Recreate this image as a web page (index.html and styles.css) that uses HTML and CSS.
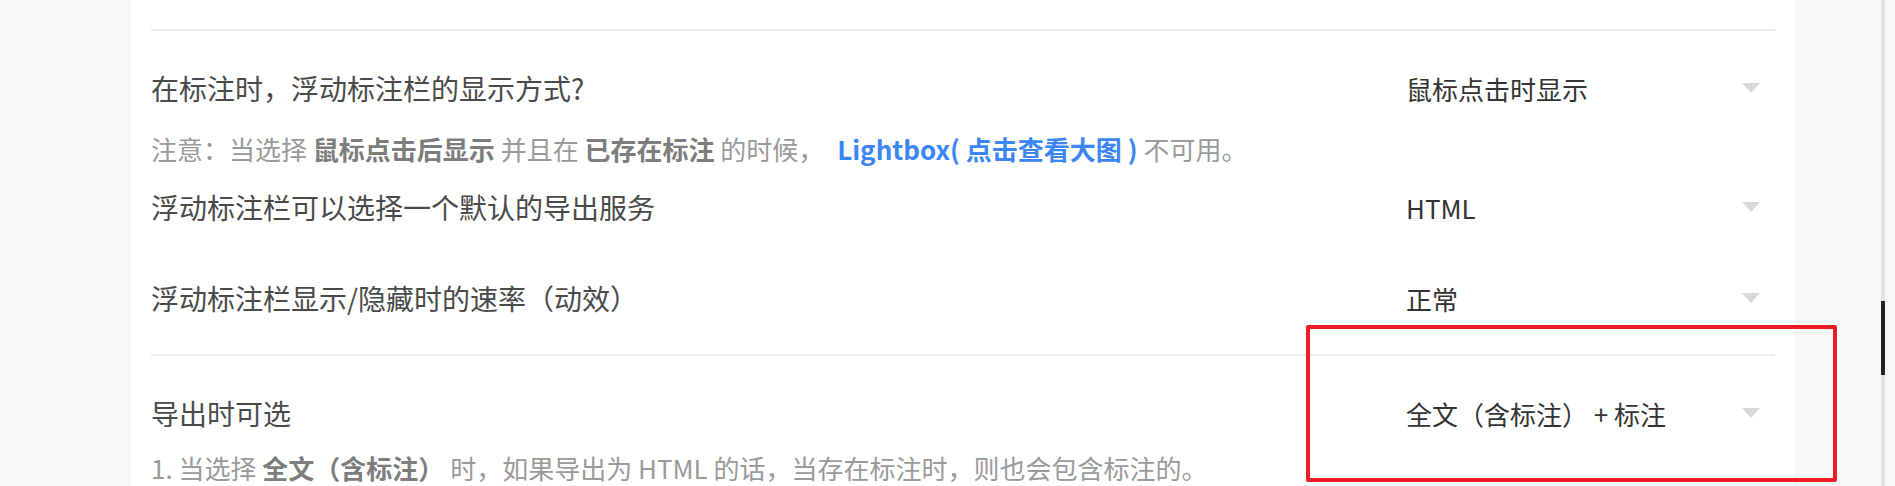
FILE: index.html
```
<!DOCTYPE html>
<html lang="zh-CN">
<head>
    <meta charset="UTF-8">
    <meta name="viewport" content="width=device-width, initial-scale=1.0">
    <title>设置</title>
    <link rel="stylesheet" href="styles.css">
</head>
<body>
    <div class="page">
        <div class="side"></div>

        <div class="content">
            <div class="group">
                <div class="row">
                    <div class="title">在标注时，浮动标注栏的显示方式?</div>
                    <div class="select">鼠标点击时显示<span class="arrow"></span></div>
                </div>
                <div class="note note-first">注意：当选择 <b>鼠标点击后显示</b> 并且在 <b>已存在标注</b> 的时候， <a class="link">Lightbox( 点击查看大图 )</a> 不可用。</div>

                <div class="row row-second">
                    <div class="title">浮动标注栏可以选择一个默认的导出服务</div>
                    <div class="select">HTML<span class="arrow"></span></div>
                </div>

                <div class="row row-third">
                    <div class="title">浮动标注栏显示/隐藏时的速率（动效）</div>
                    <div class="select">正常<span class="arrow"></span></div>
                </div>
            </div>

            <div class="group">
                <div class="row">
                    <div class="title">导出时可选</div>
                    <div class="select">全文（含标注） + 标注<span class="arrow"></span></div>
                </div>
                <div class="note note-last">1. 当选择 <b>全文（含标注）</b> 时，如果导出为 HTML 的话，当存在标注时，则也会包含标注的。</div>
            </div>
        </div>

        <div class="side side-right">
            <div class="scroll-track"><div class="scroll-thumb"></div></div>
        </div>
    </div>

    <!-- 截图上的红色标记框 -->
    <div class="mark"></div>
</body>
</html>
```

FILE: styles.css
```
body {
    margin: 0;
    font-family: "Noto Sans CJK SC", "Noto Sans", sans-serif;
    background-color: #f8f8f8;
    overflow: hidden;
}
.page {
    display: flex;
    height: 486px;
    overflow: hidden;
}
.side {
    width: 131px;
    background-color: #f8f8f8;
}
.side-right {
    width: 100px;
    display: flex;
    justify-content: flex-end;
}
.scroll-track {
    width: 4px;
    margin-right: 10px;
    background-color: #e3e3e3;
}
.scroll-thumb {
    margin-top: 301px;
    height: 74px;
    background-color: #222;
}
.content {
    flex: 1;
    background: white;
    padding: 29px 20px 0;
}
.group {
    border-top: 2px solid #ececec;
    padding: 30px 0 29px;
}
.row {
    display: flex;
    align-items: center;
    justify-content: space-between;
    height: 54px;
}
.row-second {
    margin-top: 13px;
}
.row-third {
    margin-top: 37px;
}
.title {
    font-size: 28px;
    color: #4a4a4a;
}
.select {
    width: 354px;
    padding-right: 15px;
    display: flex;
    align-items: center;
    justify-content: space-between;
    font-size: 26px;
    color: #333;
}
.arrow {
    width: 0;
    height: 0;
    border-left: 9px solid transparent;
    border-right: 9px solid transparent;
    border-top: 10px solid #d9d9d9;
}
.note {
    font-size: 26px;
    line-height: 36px;
    color: #9a9a9a;
    white-space: nowrap;
}
.note b {
    color: #7d7d7d;
}
.note-first {
    margin-top: 16px;
}
.note-last {
    margin-top: 10px;
}
.link {
    color: #3b86f4;
    font-weight: bold;
    margin-left: 7px;
}
.mark {
    position: absolute;
    left: 1306px;
    top: 325px;
    width: 523px;
    height: 149px;
    border: 4px solid #ec1c24;
    border-radius: 2px;
}
```
